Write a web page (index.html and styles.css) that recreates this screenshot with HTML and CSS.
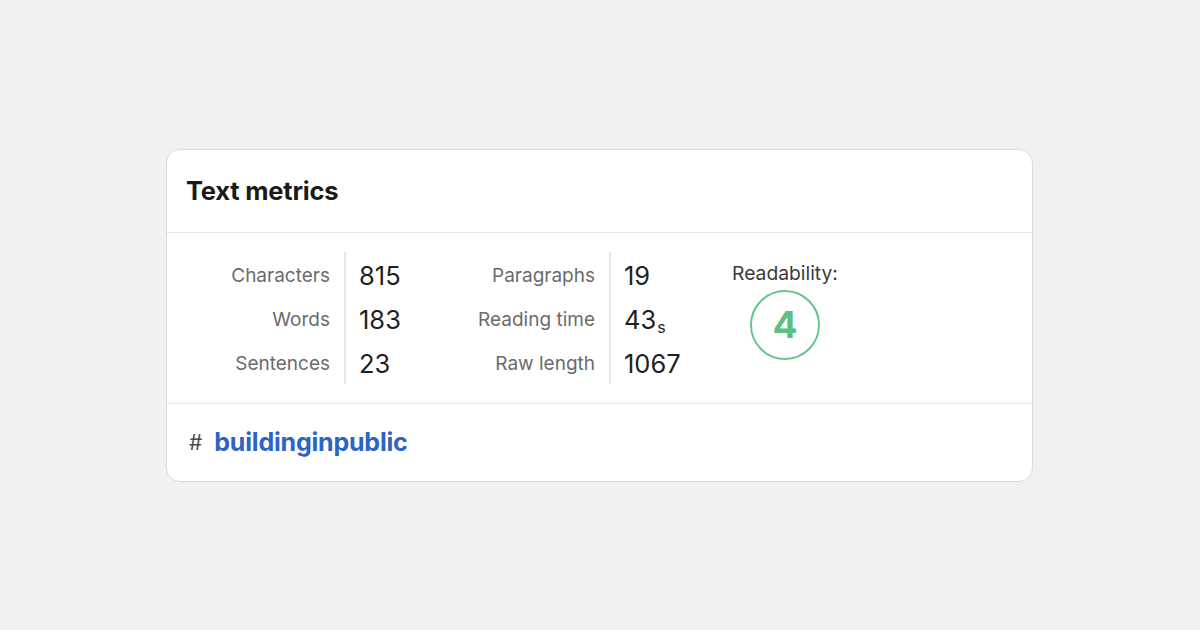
FILE: index.html
```html
<!DOCTYPE html>
<html>
<head>
<meta charset="utf-8">
<link rel="stylesheet" href="styles.css">
</head>
<body>
<div class="card">
  <div class="card-head"><h1 class="title">Text metrics</h1></div>
  <div class="card-body">
    <div class="group group-a">
      <div class="labels">
        <div class="cell">Characters</div>
        <div class="cell">Words</div>
        <div class="cell">Sentences</div>
      </div>
      <div class="values">
        <div class="cell">815</div>
        <div class="cell">183</div>
        <div class="cell">23</div>
      </div>
    </div>
    <div class="group group-b">
      <div class="labels">
        <div class="cell">Paragraphs</div>
        <div class="cell">Reading time</div>
        <div class="cell">Raw length</div>
      </div>
      <div class="values">
        <div class="cell">19</div>
        <div class="cell">43<span class="unit">s</span></div>
        <div class="cell">1067</div>
      </div>
    </div>
    <div class="readability">
      <div class="r-label">Readability:</div>
      <div class="r-score">4</div>
    </div>
  </div>
  <div class="card-foot">
    <span class="hash">#</span><a class="tag" href="#">buildinginpublic</a>
  </div>
</div>
</body>
</html>
```
FILE: styles.css
```css
html, body {
  margin: 0;
  padding: 0;
}
body {
  width: 1200px;
  height: 630px;
  box-sizing: border-box;
  padding-right: 1px;
  background: #f2f1ef;
  font-family: Inter, "Noto Sans", "Liberation Sans", sans-serif;
  display: flex;
  align-items: center;
  justify-content: center;
}
.card {
  width: 867px;
  box-sizing: border-box;
  background: #ffffff;
  border: 1px solid #dcdbd8;
  border-radius: 14px;
}
.card-head {
  height: 83px;
  box-sizing: border-box;
  padding: 0 19px;
  display: flex;
  align-items: center;
  border-bottom: 1px solid #e6e5e3;
}
.title {
  margin: 0;
  font-size: 25.5px;
  font-weight: 700;
  color: #1a1a1a;
  letter-spacing: -0.2px;
}
.card-body {
  display: flex;
  padding: 19px 20px 19px 19px;
  border-bottom: 1px solid #e6e5e3;
}
.group {
  display: flex;
}
.labels {
  text-align: right;
  padding-right: 14px;
  color: #6b6b6b;
  font-size: 19px;
}
.values {
  border-left: 2px solid #e8e7e5;
  padding-left: 13px;
  color: #1f1f1f;
  font-size: 25.5px;
}
.cell {
  height: 44px;
  line-height: 44px;
  white-space: nowrap;
  position: relative;
  top: 2px;
}
.group-a .labels { width: 144px; }
.group-a .values { width: 67px; }
.group-b .labels { width: 169px; }
.group-b .values { width: 92px; }
.unit {
  font-size: 16px;
  vertical-align: -4px;
  margin-left: 1px;
}
.readability {
  margin-left: 16px;
  display: flex;
  flex-direction: column;
  align-items: center;
  padding-top: 10px;
}
.r-label {
  font-size: 19.3px;
  color: #3a3a3a;
  line-height: 22px;
}
.r-score {
  margin-top: 6px;
  width: 66px;
  height: 66px;
  border: 2.5px solid #66c48c;
  border-radius: 50%;
  display: flex;
  align-items: center;
  justify-content: center;
  color: #5cbf83;
  font-size: 37px;
  font-weight: 700;
}
.card-foot {
  height: 77px;
  box-sizing: border-box;
  padding: 0 22px;
  display: flex;
  align-items: center;
}
.hash {
  color: #4a4a4a;
  font-size: 21px;
  margin-right: 12px;
}
.tag {
  color: #2b64c2;
  font-size: 25px;
  font-weight: 700;
  text-decoration: none;
  letter-spacing: -0.2px;
}
```
